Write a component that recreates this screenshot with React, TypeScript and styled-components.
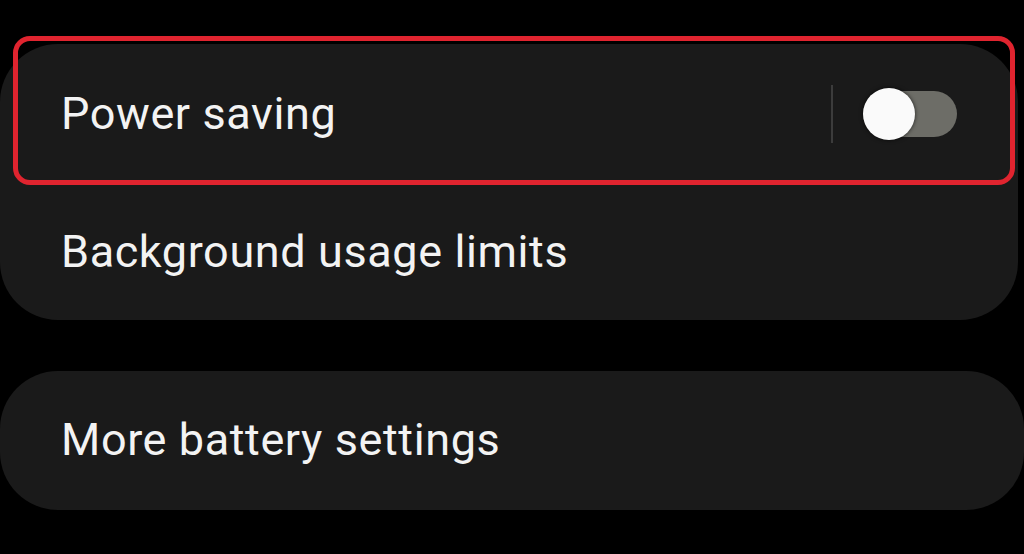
import React from "react";
import styled, { createGlobalStyle } from "styled-components";

const Global = createGlobalStyle`
  html, body { margin: 0; padding: 0; background: #000; }
  body { font-family: Roboto, "Noto Sans", Arial, sans-serif; }
`;

const Page = styled.div`
  width: 1024px;
  height: 554px;
  background: #000;
  padding-top: 44px;
  box-sizing: border-box;
  display: flex;
  flex-direction: column;
  overflow: hidden;
`;

const Card = styled.div<{ $right: number; $gap?: number }>`
  position: relative;
  background: #1a1a1a;
  border-radius: 58px;
  margin-right: ${(p) => p.$right}px;
  margin-top: ${(p) => p.$gap ?? 0}px;
  display: flex;
  flex-direction: column;
`;

const Row = styled.div<{ $h: number }>`
  height: ${(p) => p.$h}px;
  display: flex;
  align-items: center;
  padding: 0 61px 0 61px;
  box-sizing: border-box;
`;

const Label = styled.span`
  flex: 1;
  color: #f3f3f3;
  font-size: 45px;
  line-height: 1;
  letter-spacing: 0.6px;
  font-weight: 400;
  padding-bottom: 2px;
`;

const Divider = styled.div`
  width: 2px;
  height: 58px;
  background: #3c3c3c;
  margin-right: 30px;
`;

const Track = styled.div`
  position: relative;
  width: 94px;
  height: 46px;
  border-radius: 23px;
  background: #6d6d67;
  display: flex;
  align-items: center;
`;

const Thumb = styled.div`
  position: absolute;
  left: 0px;
  top: 50%;
  width: 52px;
  height: 52px;
  margin-top: -26px;
  border-radius: 50%;
  background: #fafafa;
  box-shadow: 0 0 4px rgba(0, 0, 0, 0.7);
`;

const Highlight = styled.div`
  position: absolute;
  left: 13px;
  top: -8px;
  width: 1002px;
  height: 149px;
  box-sizing: border-box;
  border: 5px solid #e0242f;
  border-radius: 17px;
  pointer-events: none;
`;

export default function App() {
  return (
    <>
      <Global />
      <Page>
        <Card $right={6}>
          <Row $h={140}>
            <Label>Power saving</Label>
            <Divider />
            <Track>
              <Thumb />
            </Track>
          </Row>
          <Row $h={136}>
            <Label>Background usage limits</Label>
          </Row>
          <Highlight />
        </Card>
        <Card $right={0} $gap={51}>
          <Row $h={139}>
            <Label>More battery settings</Label>
          </Row>
        </Card>
      </Page>
    </>
  );
}
